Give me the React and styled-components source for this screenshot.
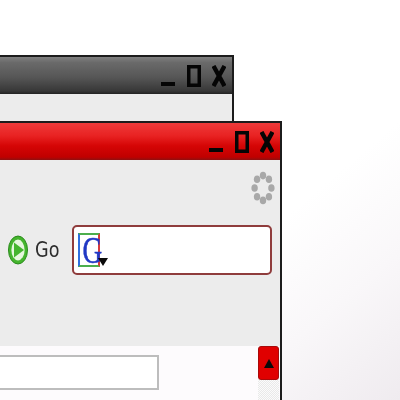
import React from "react";
import styled, { createGlobalStyle } from "styled-components";

const Global = createGlobalStyle`
  html, body {
    margin: 0;
    padding: 0;
    background: #fff;
  }
`;

const Desktop = styled.div`
  position: relative;
  width: 400px;
  height: 400px;
  overflow: hidden;
  background: linear-gradient(140deg, #fff 62%, #f9f7f9 80%, #efebef 100%);
  font-family: "DejaVu Sans", sans-serif;
  filter: blur(0.5px);
`;

const Window = styled.div`
  position: absolute;
  left: -20px;
  top: ${(p) => p.$top}px;
  width: ${(p) => p.$width}px;
  height: ${(p) => p.$height}px;
  box-sizing: border-box;
  border: 1px solid #1c1c1c;
  border-top-width: 2px;
  border-right-width: 2px;
  display: flex;
  flex-direction: column;
  background: #ececec;
`;

const TitleBar = styled.div`
  height: ${(p) => p.$h}px;
  flex: none;
  box-sizing: border-box;
  display: flex;
  justify-content: flex-end;
  align-items: flex-end;
  padding: 0 6px 7px 0;
  background: ${(p) =>
    p.$red
      ? "linear-gradient(#ee3a3a 0%, #e82222 35%, #d50505 62%, #c00000 92%, #8e1010 100%)"
      : "linear-gradient(#808080 0%, #6a6a6a 15%, #565656 55%, #373737 92%, #222 100%)"};
`;

const ControlIcon = styled.svg`
  display: block;
  flex: none;
  margin-left: ${(p) => p.$gap}px;
`;

const Minimize = () => (
  <ControlIcon width="14" height="22" viewBox="0 0 14 22" $gap={0}>
    <rect x="0" y="17" width="14" height="4" fill="#050505" />
  </ControlIcon>
);

const Maximize = () => (
  <ControlIcon width="14" height="22" viewBox="0 0 14 22" $gap={12}>
    <rect x="1.75" y="1.75" width="10.5" height="18.5" fill="none" stroke="#050505" strokeWidth="3.5" />
  </ControlIcon>
);

const Close = () => (
  <ControlIcon width="14" height="22" viewBox="0 0 14 22" $gap={11}>
    <path d="M1.5 1 L12.5 21 M12.5 1 L1.5 21" fill="none" stroke="#050505" strokeWidth="4.4" />
  </ControlIcon>
);

const Controls = () => (
  <>
    <Minimize />
    <Maximize />
    <Close />
  </>
);

const Panel = styled.div`
  height: 186px;
  flex: none;
  box-sizing: border-box;
  padding: 11px 5px 0 27px;
  display: flex;
  flex-direction: column;
  background: #ececec;
`;

const SpinnerIcon = styled.svg`
  align-self: flex-end;
  display: block;
`;

const SPINNER_DOTS = Array.from({ length: 8 }, (_, i) => (i * Math.PI) / 4);

const Spinner = () => (
  <SpinnerIcon width="24" height="34" viewBox="0 0 24 34">
    {SPINNER_DOTS.map((a) => (
      <ellipse
        key={a}
        cx={12 + 8.4 * Math.sin(a)}
        cy={17 - 12.4 * Math.cos(a)}
        rx="3.2"
        ry="3.8"
        fill="#a8a8a8"
      />
    ))}
  </SpinnerIcon>
);

const SearchRow = styled.div`
  display: flex;
  align-items: center;
  margin-top: 20px;
`;

const GoIcon = styled.svg`
  display: block;
  flex: none;
`;

const GoLabel = styled.span`
  display: inline-block;
  margin-left: 7px;
  width: 23px;
  font-size: 22px;
  line-height: 24px;
  color: #2c2c2c;
  transform: scaleX(0.8);
  transform-origin: left center;
`;

const SearchBox = styled.div`
  margin-left: 14px;
  width: 200px;
  height: 50px;
  box-sizing: border-box;
  border: 2px solid #8f3c3c;
  border-radius: 5px;
  background: #fff;
  padding: 6px 0 0 4px;
  display: flex;
  align-items: flex-start;
`;

const EngineBadge = styled.div`
  position: relative;
  width: 22px;
  height: 34px;
  box-sizing: border-box;
  border-style: solid;
  border-width: 2px;
  border-color: #4cae4c #d83a3a #4cae4c #2f6fe0;
`;

const EngineLetter = styled.span`
  display: block;
  font-family: "Liberation Serif", serif;
  font-size: 38px;
  line-height: 30px;
  text-align: center;
  color: #2138c4;
  -webkit-text-stroke: 0.5px #2138c4;
  transform: scaleX(0.72);
`;

const EngineCaret = styled.span`
  position: absolute;
  left: 18px;
  top: 23px;
  width: 0;
  height: 0;
  border-left: 5px solid transparent;
  border-right: 5px solid transparent;
  border-top: 8px solid #0a0a0a;
`;

const Content = styled.div`
  flex: 1;
  display: flex;
  justify-content: space-between;
  background: #fdfbfd;
`;

const TextField = styled.div`
  width: 178px;
  height: 35px;
  margin-top: 9px;
  box-sizing: border-box;
  border: 2px solid #bdbdbd;
  background: #fff;
`;

const ScrollColumn = styled.div`
  width: 21px;
  margin-right: 1px;
  display: flex;
  flex-direction: column;
  background-image: repeating-conic-gradient(#e9e9e9 0 25%, #fbfbfb 0 50%);
  background-size: 2px 2px;
`;

const ScrollUp = styled.div`
  height: 34px;
  box-sizing: border-box;
  border: 1px solid #a80a0a;
  border-radius: 3px;
  background: #e00000;
  display: flex;
  align-items: center;
  justify-content: center;
`;

const UpArrow = styled.span`
  width: 0;
  height: 0;
  border-left: 5px solid transparent;
  border-right: 5px solid transparent;
  border-bottom: 9px solid #0a0a0a;
`;

export default function App() {
  return (
    <Desktop>
      <Global />
      <Window $top={55} $width={254} $height={90}>
        <TitleBar $h={37}>
          <Controls />
        </TitleBar>
      </Window>
      <Window $top={121} $width={302} $height={300}>
        <TitleBar $h={37} $red>
          <Controls />
        </TitleBar>
        <Panel>
          <Spinner />
          <SearchRow>
            <GoIcon width="20" height="30" viewBox="0 0 20 30">
              <ellipse cx="10" cy="15" rx="9.5" ry="14" fill="#45b52e" stroke="#2a8a1c" strokeWidth="1" />
              <ellipse cx="10" cy="15" rx="6.6" ry="10.4" fill="#e6f6de" />
              <path d="M6 7.5 L16 15 L6 22.5 Z" fill="#45b52e" />
            </GoIcon>
            <GoLabel>Go</GoLabel>
            <SearchBox>
              <EngineBadge>
                <EngineLetter>G</EngineLetter>
                <EngineCaret />
              </EngineBadge>
            </SearchBox>
          </SearchRow>
        </Panel>
        <Content>
          <TextField />
          <ScrollColumn>
            <ScrollUp>
              <UpArrow />
            </ScrollUp>
          </ScrollColumn>
        </Content>
      </Window>
    </Desktop>
  );
}
